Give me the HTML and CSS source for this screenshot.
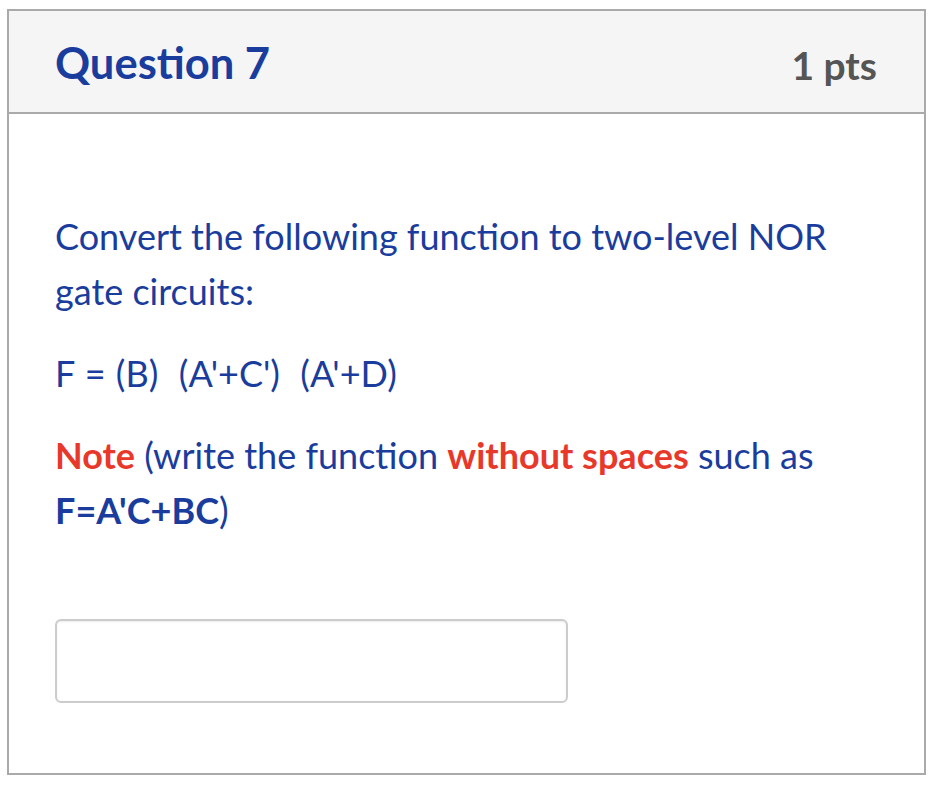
FILE: index.html
```html
<!DOCTYPE html>
<html>
<head>
<meta charset="utf-8">
<link rel="stylesheet" href="styles.css">
</head>
<body>
<div class="question">
  <div class="q-header">
    <h2 class="q-title">Question 7</h2>
    <div class="q-pts">1 pts</div>
  </div>
  <div class="q-body">
    <p class="line">Convert the following function to two-level NOR gate circuits:</p>
    <p class="line eq">F = (B)  (A'+C')  (A'+D)</p>
    <p class="line"><span class="red bold">Note</span> (write the function <span class="red bold">without spaces</span> such as <span class="bold">F=A'C+BC</span>)</p>
    <div class="answer"></div>
  </div>
</div>
</body>
</html>
```
FILE: styles.css
```css
html, body {
  margin: 0;
  padding: 0;
  background: #fff;
}
body {
  padding: 9px 10px 0 7px;
  font-family: Lato, "Open Sans", sans-serif;
}
.question {
  border: 2px solid #aaa;
  box-sizing: border-box;
  height: 766px;
  display: flex;
  flex-direction: column;
}
.q-header {
  background: #f5f5f5;
  border-bottom: 2px solid #aaa;
  height: 103px;
  box-sizing: border-box;
  display: flex;
  align-items: center;
  justify-content: space-between;
  padding: 0 47px 0 46px;
}
.q-title {
  margin: 0;
  font-size: 43.5px;
  font-weight: 700;
  color: #1a3d9d;
  position: relative;
  top: 0;
}
.q-pts {
  font-size: 39px;
  font-weight: 700;
  color: #555;
  position: relative;
  top: 3px;
}
.q-body {
  padding: 95px 46px 0 46px;
  color: #1a3d9d;
  font-size: 36px;
  line-height: 55px;
}
.line {
  margin: 0 0 27px 0;
}
.eq {
  white-space: pre;
  word-spacing: 1px;
}
.red {
  color: #e8382a;
}
.bold {
  font-weight: 700;
}
.answer {
  margin-top: 81px;
  width: 513px;
  height: 84px;
  box-sizing: border-box;
  border: 2px solid #ccc;
  border-radius: 6px;
  box-shadow: inset 0 1px 2px rgba(0,0,0,0.08);
  background: #fff;
}
```
